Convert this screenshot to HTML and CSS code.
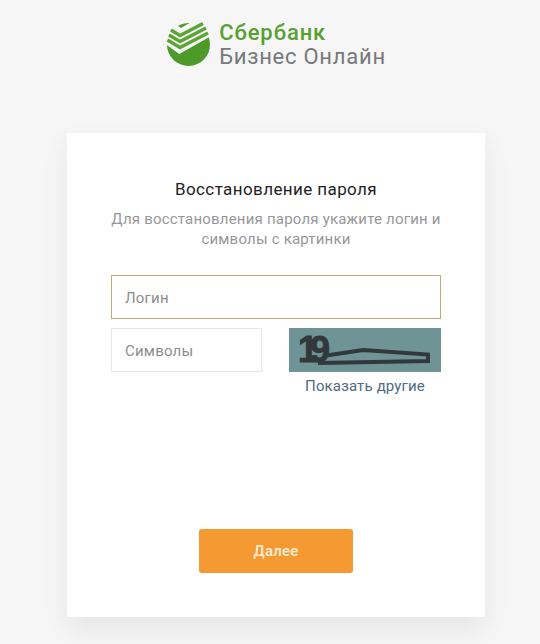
FILE: index.html
```html
<!DOCTYPE html>
<html lang="ru">

<head>
    <meta charset="UTF-8">
    <meta name="viewport" content="width=device-width, initial-scale=1.0">
    <title>Восстановление пароля</title>
    <link rel="stylesheet" href="styles.css">
</head>

<body>
    <header class="header">
        <svg class="logo-mark" width="60" height="54" viewBox="0 0 60 54">
            <circle cx="28.5" cy="26.5" r="21.5" fill="#4d9a2a"/>
            <polyline points="2,10 20,23 52,5" fill="none" stroke="#f6f6f6" stroke-width="22"/>
            <g fill="none" stroke="#5ba436" stroke-width="3.4">
                <polyline points="11,12 20,17.5 43,5.5"/>
                <polyline points="9,17 20,23.5 46,10"/>
                <polyline points="7.5,22 20,29.5 48,15"/>
            </g>
        </svg>
        <div class="logo-text">
            <div class="logo-bank">Сбербанк</div>
            <div class="logo-product">Бизнес Онлайн</div>
        </div>
    </header>

    <main class="card">
        <h1 class="title">Восстановление пароля</h1>
        <p class="subtitle">Для восстановления пароля укажите логин и символы с картинки</p>

        <form class="form">
            <input class="field field-active" type="text" placeholder="Логин">
            <div class="captcha-row">
                <input class="field" type="text" placeholder="Символы">
                <div class="captcha">
                    <svg class="captcha-image" width="152" height="44" viewBox="0 0 152 44">
                        <rect width="152" height="44" fill="#6f9496"/>
                        <text x="9" y="34" class="captcha-digits">19</text>
                        <polyline points="34,28 74,22 139,26.5 139,33 29,35" fill="none" stroke="#33383c" stroke-width="4"/>
                    </svg>
                    <a class="captcha-link" href="#">Показать другие</a>
                </div>
            </div>
            <button class="submit" type="submit">Далее</button>
        </form>
    </main>
</body>

</html>
```

FILE: styles.css
```css
html,
body {
    height: 100%;
}

body {
    margin: 0;
    background-color: #f6f6f6;
    font-family: Roboto, "Liberation Sans", sans-serif;
    overflow: hidden;
}

.header {
    display: flex;
    justify-content: center;
    align-items: flex-start;
    height: 133px;
    padding-left: 6px;
    box-sizing: border-box;
    padding-top: 18px;
}

.logo-mark {
    margin-right: -1px;
}

.logo-text {
    display: flex;
    flex-direction: column;
    gap: 0;
    padding-top: 3px;
}

.logo-bank {
    color: #57a033;
    font-size: 22px;
    font-weight: 500;
    line-height: 24px;
    letter-spacing: 0.9px;
}

.logo-product {
    color: #77787a;
    font-size: 22px;
    line-height: 24px;
    letter-spacing: 0.75px;
}

.card {
    width: 418px;
    height: 484px;
    margin-left: 67px;
    padding: 46px 44px 0;
    box-sizing: border-box;
    background-color: #fff;
    border-radius: 3px;
    box-shadow: 0 12px 28px rgba(0, 0, 0, 0.07);
}

.title {
    margin: 0;
    color: #222;
    font-size: 17px;
    font-weight: 400;
    line-height: 20px;
    letter-spacing: 0.4px;
    text-align: center;
}

.subtitle {
    margin: 10px 0 0;
    color: #97979a;
    font-size: 15px;
    line-height: 20px;
    letter-spacing: 0.2px;
    text-align: center;
}

.form {
    display: flex;
    flex-direction: column;
    margin-top: 26px;
}

.field {
    width: 100%;
    height: 44px;
    padding: 2px 13px 0;
    box-sizing: border-box;
    border: 1px solid #e6e6e6;
    outline: none;
    background-color: #fff;
    font-family: inherit;
    font-size: 15px;
    letter-spacing: 0.2px;
}

.field::placeholder {
    color: #8d8d8d;
    opacity: 1;
}

.field-active {
    border-color: #c8a872;
}

.captcha-row {
    display: flex;
    justify-content: space-between;
    margin-top: 9px;
}

.captcha-row .field {
    width: 151px;
}

.captcha {
    display: flex;
    flex-direction: column;
    align-items: center;
    width: 152px;
}

.captcha-image {
    display: block;
    overflow: visible;
}

.captcha-digits {
    fill: #33383c;
    stroke: #33383c;
    stroke-width: 1px;
    font-family: "Liberation Sans", sans-serif;
    font-size: 36px;
    font-weight: 700;
    letter-spacing: -8px;
}

.captcha-link {
    margin-top: 5px;
    color: #4f6b80;
    font-size: 15px;
    line-height: 18px;
    letter-spacing: 0.15px;
    text-decoration: none;
}

.submit {
    align-self: center;
    width: 154px;
    height: 44px;
    margin-top: 134px;
    border: none;
    border-radius: 3px;
    background-color: #f59a33;
    color: #fbeed8;
    font-family: inherit;
    font-size: 15px;
    font-weight: 500;
    letter-spacing: 0.2px;
    cursor: pointer;
}
```
